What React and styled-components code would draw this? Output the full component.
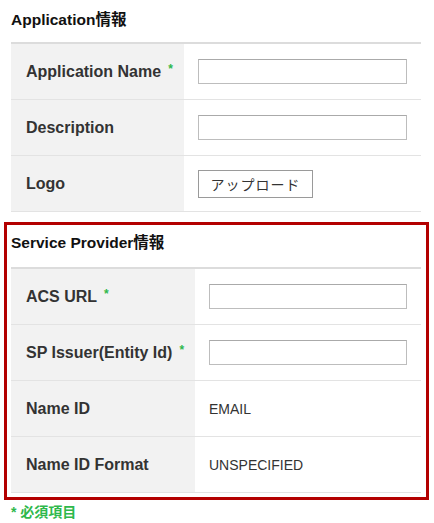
import React from "react";
import styled, { createGlobalStyle } from "styled-components";

const GlobalStyle = createGlobalStyle`
  html, body {
    margin: 0;
    padding: 0;
    background: #fff;
  }
  body {
    font-family: "Liberation Sans", "Noto Sans CJK JP", sans-serif;
    color: #333;
  }
`;

const Page = styled.div`
  padding: 0 13px 0 11px;
`;

const Section = styled.section`
  margin-bottom: 10px;
`;

const Highlight = styled.section`
  margin: 0 -8px 0 -7px;
  padding: 0 5px 4px 4px;
  border: 3px solid #b30000;
`;

const SectionTitle = styled.h2`
  margin: 0;
  padding: ${(p) => (p.$boxed ? "8px 0 14px" : "10px 0 12px")};
  font-size: 15.5px;
  line-height: 20px;
  font-weight: 700;
  color: #111;
`;

const Table = styled.div`
  border-top: 2px solid #dcdcdc;
`;

const Row = styled.div`
  display: grid;
  grid-template-columns: ${(p) => p.$labelWidth}px 1fr;
  height: 56px;
  border-bottom: 1px solid #e3e3e3;
  box-sizing: border-box;
`;

const Label = styled.div`
  display: flex;
  align-items: center;
  padding-left: 15px;
  background: #f2f2f2;
  font-size: 16px;
  font-weight: 700;
  color: #333;
  white-space: nowrap;
`;

const Req = styled.span`
  margin-left: 7px;
  color: #2eb84b;
  font-size: 12px;
  align-self: flex-start;
  margin-top: 18px;
`;

const Value = styled.div`
  display: flex;
  align-items: center;
  padding-left: 14px;
  font-size: 14px;
  color: #333;
`;

const TextInput = styled.input`
  width: ${(p) => p.$width}px;
  height: 25px;
  box-sizing: border-box;
  border: 1px solid #bdbdbd;
  border-top-color: #aaa;
  border-radius: 0;
  background: #fff;
  outline: none;
  padding: 0 4px;
`;

const UploadButton = styled.button`
  width: 115px;
  height: 28px;
  box-sizing: border-box;
  border: 1px solid #9a9a9a;
  border-radius: 0;
  background: #fff;
  font-family: "Noto Sans CJK JP", sans-serif;
  font-size: 14px;
  color: #333;
  letter-spacing: 1px;
  padding: 0;
`;

const Note = styled.p`
  margin: 3px 0 0;
  font-size: 14px;
  line-height: 18px;
  font-weight: 700;
  color: #2eb84b;
`;

const FieldRow = ({ label, required, labelWidth, children }) => (
  <Row $labelWidth={labelWidth}>
    <Label>
      {label}
      {required && <Req>*</Req>}
    </Label>
    <Value>{children}</Value>
  </Row>
);

const App = () => {
  return (
    <>
      <GlobalStyle />
      <Page>
        <Section>
          <SectionTitle>Application情報</SectionTitle>
          <Table>
            <FieldRow label="Application Name" required labelWidth={173}>
              <TextInput $width={209} />
            </FieldRow>
            <FieldRow label="Description" labelWidth={173}>
              <TextInput $width={209} />
            </FieldRow>
            <FieldRow label="Logo" labelWidth={173}>
              <UploadButton>アップロード</UploadButton>
            </FieldRow>
          </Table>
        </Section>

        <Highlight>
          <SectionTitle $boxed>Service Provider情報</SectionTitle>
          <Table>
            <FieldRow label="ACS URL" required labelWidth={184}>
              <TextInput $width={198} />
            </FieldRow>
            <FieldRow label="SP Issuer(Entity Id)" required labelWidth={184}>
              <TextInput $width={198} />
            </FieldRow>
            <FieldRow label="Name ID" labelWidth={184}>
              EMAIL
            </FieldRow>
            <FieldRow label="Name ID Format" labelWidth={184}>
              UNSPECIFIED
            </FieldRow>
          </Table>
        </Highlight>

        <Note>* 必須項目</Note>
      </Page>
    </>
  );
};

export default App;
